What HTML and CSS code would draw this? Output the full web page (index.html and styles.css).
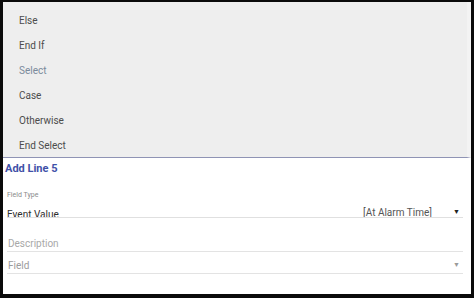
FILE: index.html
```html
<!DOCTYPE html>
<html lang="en">
<head>
    <meta charset="UTF-8">
    <title>Add Line</title>
    <link rel="stylesheet" href="styles.css">
</head>
<body>
    <div class="frame">
        <ul class="menu">
            <li class="menu-item">Else</li>
            <li class="menu-item">End If</li>
            <li class="menu-item selected">Select</li>
            <li class="menu-item">Case</li>
            <li class="menu-item">Otherwise</li>
            <li class="menu-item">End Select</li>
        </ul>

        <div class="form">
            <div class="form-title">Add Line 5</div>

            <div class="field-label">Field Type</div>
            <div class="field-select">
                <span class="value">Event Value</span>
                <span class="extra">[At Alarm Time]</span>
                <span class="arrow">&#9660;</span>
            </div>

            <div class="field-input desc">Description</div>
            <div class="field-input field">
                <span>Field</span>
                <span class="arrow light">&#9660;</span>
            </div>
        </div>
    </div>
</body>
</html>
```

FILE: styles.css
```css
*{
    box-sizing: border-box;
}

body{
    margin: 0;
    font-family: Roboto, "Liberation Sans", sans-serif;
    background: #000;
}

.frame{
    width: 474px;
    height: 298px;
    border-style: solid;
    border-color: #0a0a0a;
    border-width: 2px 3px 4px 3px;
    background: #fff;
    overflow: hidden;
}

.menu{
    list-style: none;
    margin: 0;
    padding: 6px 0 0 0;
    height: 156px;
    overflow: hidden;
    background: #eeeeee;
    border-bottom: 1px solid #8f93b4;
    border-right: 4px solid #f3f3f3;
}

.menu-item{
    height: 25px;
    line-height: 25px;
    padding-left: 16px;
    font-size: 10px;
    color: #4c4c4c;
}

.menu-item.selected{
    color: #7b8b9c;
}

.form{
    padding: 0 8px 0 4px;
}

.form-title{
    height: 22px;
    line-height: 22px;
    margin-left: -2px;
    font-size: 11px;
    font-weight: bold;
    color: #3f51a8;
}

.field-label{
    margin-top: 10px;
    height: 10px;
    line-height: 10px;
    font-size: 7px;
    color: #8a8a8a;
}

.field-select{
    display: flex;
    align-items: flex-start;
    height: 18px;
    padding-top: 8px;
    line-height: 14px;
    overflow: hidden;
    border-bottom: 1px solid #e0e0e0;
    font-size: 10px;
}

.field-select .value{
    flex: 1;
    color: #2e2e2e;
}

.field-select .extra{
    color: #555;
    width: 90px;
    margin-top: -2px;
}

.arrow{
    font-size: 7px;
    line-height: 9px;
    color: #222;
    margin-right: 3px;
}

.arrow.light{
    color: #9a9a9a;
    margin-top: 2px;
}

.field-input{
    display: flex;
    justify-content: space-between;
    line-height: 14px;
    font-size: 10px;
    border-bottom: 1px solid #e3e3e3;
    padding-left: 1px;
}

.desc{
    height: 34px;
    padding-top: 19px;
    color: #a8a8a8;
}

.field{
    height: 22px;
    padding-top: 7px;
    color: #9c9c9c;
}
```
